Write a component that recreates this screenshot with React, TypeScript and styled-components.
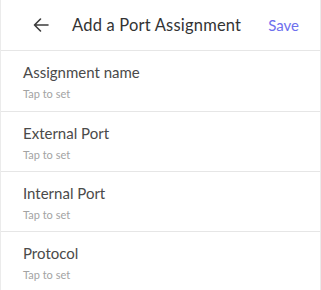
import styled, { createGlobalStyle } from "styled-components";

const GlobalStyle = createGlobalStyle`
  html, body {
    margin: 0;
    padding: 0;
    background: #fff;
  }
  body {
    font-family: Lato, "Noto Sans", sans-serif;
  }
`;

const Screen = styled.div`
  width: 321px;
  height: 290px;
  box-sizing: border-box;
  border-left: 1px solid #ebebeb;
  border-right: 1px solid #ebebeb;
  margin-right: 1px;
  display: flex;
  flex-direction: column;
  overflow: hidden;
`;

const Header = styled.header`
  height: 50px;
  display: flex;
  align-items: center;
  padding: 0 21px 0 31px;
  border-bottom: 1px solid #e6e6e6;
  flex-shrink: 0;
`;

const BackButton = styled.button`
  background: none;
  border: 0;
  padding: 0;
  width: 18px;
  height: 18px;
  display: flex;
  align-items: center;
  justify-content: center;
  color: #3c3c3c;
  cursor: pointer;
`;

const Title = styled.h1`
  flex: 1;
  margin: 0 0 0 22px;
  font-size: 16.5px;
  font-weight: 400;
  color: #333;
  letter-spacing: 0.2px;
`;

const SaveButton = styled.button`
  background: none;
  border: 0;
  padding: 0;
  font-family: inherit;
  font-size: 15px;
  color: #6e70ee;
  cursor: pointer;
`;

const Row = styled.div<{ $first?: boolean }>`
  height: ${(p) => (p.$first ? 61 : 60)}px;
  flex-shrink: 0;
  box-sizing: border-box;
  padding: 12px 22px 0;
  border-bottom: 1px solid #e6e6e6;
  display: flex;
  flex-direction: column;
  gap: 6px;
`;

const Label = styled.div`
  font-size: 15px;
  color: #4a4a4a;
`;

const Hint = styled.div`
  font-size: 11px;
  color: #a3a3a3;
`;

const fields = ["Assignment name", "External Port", "Internal Port", "Protocol"];

export default function App() {
  return (
    <>
      <GlobalStyle />
      <Screen>
        <Header>
          <BackButton aria-label="Back">
            <svg width="16" height="16" viewBox="0 0 16 16" fill="none">
              <path
                d="M15 8H1.5M7.5 2L1.5 8l6 6"
                stroke="currentColor"
                strokeWidth="1.6"
                strokeLinecap="round"
                strokeLinejoin="round"
              />
            </svg>
          </BackButton>
          <Title>Add a Port Assignment</Title>
          <SaveButton>Save</SaveButton>
        </Header>
        {fields.map((f, i) => (
          <Row key={f} $first={i === 0}>
            <Label>{f}</Label>
            <Hint>Tap to set</Hint>
          </Row>
        ))}
      </Screen>
    </>
  );
}
